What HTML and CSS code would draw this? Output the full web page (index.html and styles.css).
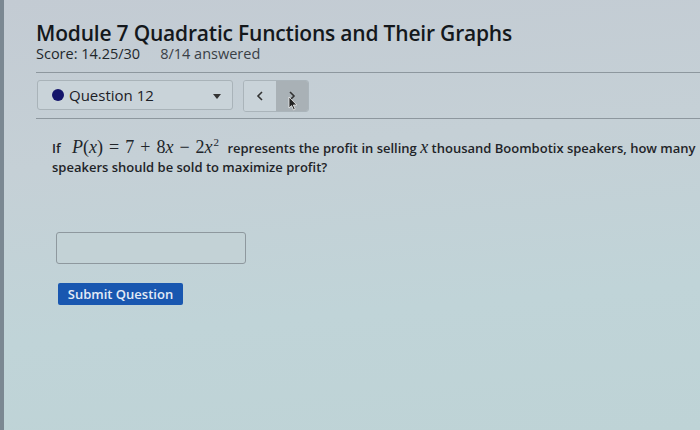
FILE: index.html
```html
<!DOCTYPE html>
<html>
<head>
<meta charset="utf-8">
<link rel="stylesheet" href="styles.css">
</head>
<body>
<div class="screen">
  <div class="page">
    <h1 class="title">Module 7 Quadratic Functions and Their Graphs</h1>
    <div class="meta"><span class="score">Score: 14.25/30</span><span class="answered">8/14 answered</span></div>
    <div class="rule"></div>
    <div class="toolbar">
      <div class="select">
        <span class="dot"></span>
        <span class="qlabel">Question 12</span>
        <span class="caret"></span>
      </div>
      <div class="nav">
        <button class="navbtn">
          <svg width="8" height="10" viewBox="0 0 8 10"><path d="M6 1 L2 5 L6 9" fill="none" stroke="#333" stroke-width="1.6"/></svg>
        </button>
        <button class="navbtn hover">
          <svg width="8" height="10" viewBox="0 0 8 10"><path d="M2 1 L6 5 L2 9" fill="none" stroke="#333" stroke-width="1.6"/></svg>
          <svg class="cursor" width="10" height="15" viewBox="0 0 10 15"><path d="M1 1 L1 12 L3.6 9.6 L5.6 14 L7.2 13.2 L5.3 9 L8.8 9 Z" fill="#222" stroke="#eee" stroke-width="0.8"/></svg>
        </button>
      </div>
    </div>
    <div class="rule rule2"></div>
    <div class="question">
      <p class="qtext">If <span class="math lead"><i>P</i>(<i>x</i>)<span class="op">=</span>7<span class="op">+</span>8<i>x</i><span class="op">−</span>2<i>x</i><sup>2</sup></span> represents the profit in selling <span class="math"><i>x</i></span> thousand Boombotix speakers, how many speakers should be sold to maximize profit?</p>
      <div class="answer"></div>
      <button class="submit">Submit Question</button>
    </div>
  </div>
</div>
</body>
</html>
```
FILE: styles.css
```css
html, body {
  margin: 0;
  padding: 0;
}
body {
  width: 700px;
  height: 430px;
  overflow: hidden;
  font-family: "Open Sans", "DejaVu Sans", sans-serif;
  color: #1e2226;
}
.screen {
  width: 700px;
  height: 430px;
  box-sizing: border-box;
  border-left: 4px solid #7b8892;
  background: linear-gradient(175deg, #c3cbd3 0%, #c5d0d6 35%, #c0d4d8 70%, #bed3d6 100%);
}
.page {
  padding: 20px 0 0 32px;
}
.title {
  margin: 0;
  font-size: 21px;
  font-weight: 600;
  line-height: 26px;
  letter-spacing: -0.2px;
  color: #14181c;
}
.meta {
  display: flex;
  gap: 20px;
  font-size: 14.5px;
  line-height: 18px;
  margin-top: -1px;
}
.score { color: #22272b; }
.answered { color: #3a4046; }
.rule {
  height: 1px;
  background: #8d979e;
  margin-top: 9px;
}
.toolbar {
  display: flex;
  align-items: flex-start;
  gap: 10px;
  margin-top: 7px;
  margin-left: 1px;
}
.select {
  width: 196px;
  height: 30px;
  box-sizing: border-box;
  border: 1px solid #a9b3b9;
  border-radius: 3px;
  background: #c9d3d9;
  display: flex;
  align-items: center;
  padding: 0 0 0 14px;
  position: relative;
}
.dot {
  width: 12px;
  height: 12px;
  border-radius: 50%;
  background: #14146b;
  margin-right: 5px;
}
.qlabel {
  font-size: 15px;
  color: #1c2026;
}
.caret {
  position: absolute;
  right: 11px;
  top: 13px;
  width: 0;
  height: 0;
  border-left: 4px solid transparent;
  border-right: 4px solid transparent;
  border-top: 5px solid #333;
}
.nav {
  display: flex;
  height: 32px;
  box-sizing: border-box;
  border: 1px solid #aab4ba;
  border-radius: 3px;
  overflow: hidden;
}
.navbtn {
  width: 32px;
  height: 100%;
  border: 0;
  margin: 0;
  padding: 0;
  background: #c9d3d9;
  display: flex;
  align-items: center;
  justify-content: center;
  position: relative;
}
.navbtn.hover {
  background: #a9b1b6;
}
.cursor {
  position: absolute;
  left: 12px;
  top: 15px;
}
.rule2 {
  margin-top: 6px;
}
.question {
  padding: 19px 0 0 16px;
}
.qtext {
  margin: 0;
  font-size: 13px;
  font-weight: 600;
  line-height: 19px;
  color: #1f2428;
  width: 670px;
}
.math {
  font-family: "Liberation Serif", "DejaVu Serif", serif;
  font-size: 18px;
  font-weight: 400;
  line-height: 1;
  color: #20252a;
}
.math.lead {
  margin: 0 5px 0 8px;
}
.math .op {
  margin: 0 6px;
}
.math sup {
  font-size: 11px;
  line-height: 0;
  margin-left: 1px;
}
.answer {
  width: 190px;
  height: 32px;
  box-sizing: border-box;
  border: 1px solid #8e989e;
  border-radius: 3px;
  background: #c3d2d6;
  margin: 55px 0 0 4px;
}
.submit {
  display: block;
  margin: 19px 0 0 6px;
  width: 125px;
  height: 22px;
  border: 0;
  border-radius: 2px;
  background: #1957b0;
  color: #e3ebf6;
  font-family: "Open Sans", "DejaVu Sans", sans-serif;
  font-size: 13px;
  font-weight: 600;
  padding: 0;
}
```
